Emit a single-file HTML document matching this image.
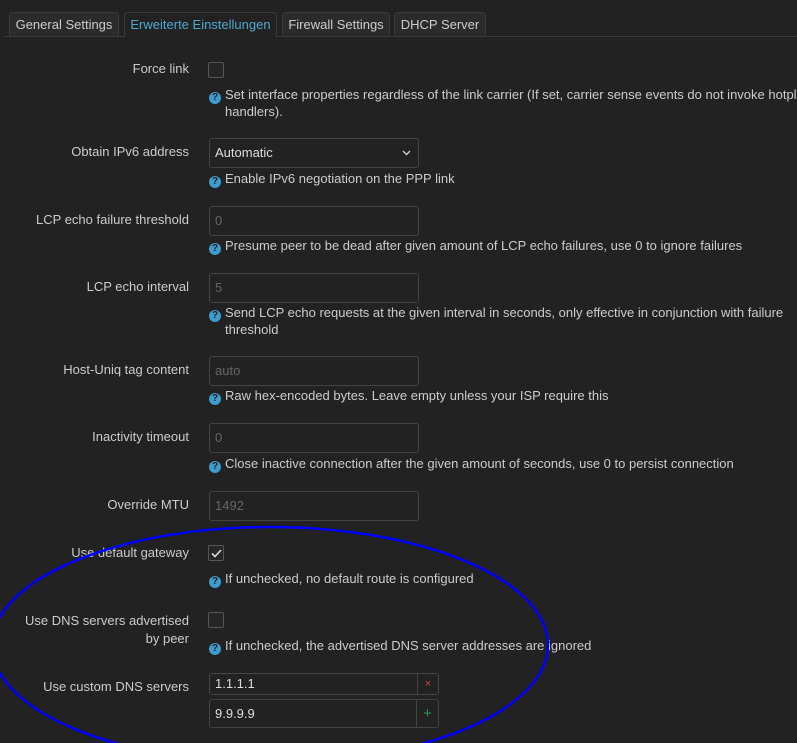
<!DOCTYPE html><html><head><style>
body{margin:0;background:#222;width:797px;height:743px;overflow:hidden;position:relative;font-family:"Liberation Sans",sans-serif;font-size:13px;color:#ccc}
.a{position:absolute}
.tab{position:absolute;top:12px;height:24px;background:#2b2b2b;border:1px solid #3a3a3a;border-bottom:none;border-radius:3px 3px 0 0;line-height:23px;font-size:13px;color:#ccc;text-align:center;box-sizing:border-box}
.lbl{position:absolute;right:608px;text-align:right;color:#ccc;line-height:16px}
.inp{position:absolute;left:209px;width:210px;height:30px;border:1px solid #444;border-radius:3px;box-sizing:border-box;background:#222;color:#666;line-height:28px;padding-left:5px}
.hlp{position:absolute;left:209px;line-height:16px;color:#ccc;white-space:nowrap}
.q{display:inline-block;width:12px;height:12px;border-radius:50%;background:#3d9ccc;color:#222;font-size:10px;font-weight:bold;line-height:12px;text-align:center;margin-right:4px;vertical-align:-1px}
.cb{position:absolute;left:208px;width:16px;height:16px;border:1px solid #555;border-radius:2px;box-sizing:border-box;background:#262626}
</style></head><body>
<div class="a" style="left:4px;right:0;top:36px;height:1px;background:#3a3a3a"></div>
<div class="tab" style="left:9px;width:110px">General Settings</div>
<div class="tab" style="left:124px;width:153px;color:#4fa8d0;background:#222;height:25px">Erweiterte Einstellungen</div>
<div class="tab" style="left:282px;width:108px">Firewall Settings</div>
<div class="tab" style="left:394px;width:92px">DHCP Server</div>

<div class="lbl" style="top:61px">Force link</div>
<div class="cb" style="top:62px"></div>
<div class="hlp" style="top:87px"><span class="q">?</span>Set interface properties regardless of the link carrier (If set, carrier sense events do not invoke hotplug<br><span style="padding-left:16px">handlers).</span></div>

<div class="lbl" style="top:144px">Obtain IPv6 address</div>
<div class="inp" style="top:138px;color:#ddd">Automatic<svg style="position:absolute;right:7px;top:11px" width="9" height="6"><path d="M1 1L4.5 4.5L8 1" fill="none" stroke="#ccc" stroke-width="1.4"/></svg></div>
<div class="hlp" style="top:171px"><span class="q">?</span>Enable IPv6 negotiation on the PPP link</div>

<div class="lbl" style="top:212px">LCP echo failure threshold</div>
<div class="inp" style="top:206px">0</div>
<div class="hlp" style="top:238px"><span class="q">?</span>Presume peer to be dead after given amount of LCP echo failures, use 0 to ignore failures</div>

<div class="lbl" style="top:279px">LCP echo interval</div>
<div class="inp" style="top:273px">5</div>
<div class="hlp" style="top:305px"><span class="q">?</span>Send LCP echo requests at the given interval in seconds, only effective in conjunction with failure<br><span style="padding-left:16px">threshold</span></div>

<div class="lbl" style="top:362px">Host-Uniq tag content</div>
<div class="inp" style="top:356px">auto</div>
<div class="hlp" style="top:388px"><span class="q">?</span>Raw hex-encoded bytes. Leave empty unless your ISP require this</div>

<div class="lbl" style="top:429px">Inactivity timeout</div>
<div class="inp" style="top:423px">0</div>
<div class="hlp" style="top:456px"><span class="q">?</span>Close inactive connection after the given amount of seconds, use 0 to persist connection</div>

<div class="lbl" style="top:497px">Override MTU</div>
<div class="inp" style="top:491px">1492</div>

<div class="lbl" style="top:545px">Use default gateway</div>
<div class="cb" style="top:545px"><svg style="position:absolute;left:2px;top:3px" width="11" height="9"><path d="M1 4.5L4 7.5L10 1" fill="none" stroke="#ddd" stroke-width="1.6"/></svg></div>
<div class="hlp" style="top:571px"><span class="q">?</span>If unchecked, no default route is configured</div>

<div class="lbl" style="top:612px;line-height:18px">Use DNS servers advertised<br>by peer</div>
<div class="cb" style="top:612px"></div>
<div class="hlp" style="top:638px"><span class="q">?</span>If unchecked, the advertised DNS server addresses are ignored</div>

<div class="lbl" style="top:679px">Use custom DNS servers</div>
<div class="inp" style="top:673px;height:22px;width:230px;line-height:20px;color:#ddd">1.1.1.1<span style="position:absolute;right:0;top:0;width:20px;height:20px;border-left:1px solid #444;color:#c44;text-align:center;font-size:11px">&#215;</span></div>
<div class="inp" style="top:699px;height:29px;width:230px;line-height:27px;color:#ddd">9.9.9.9<span style="position:absolute;right:0;top:0;width:21px;height:27px;border-left:1px solid #444;color:#2a9a5a;text-align:center;font-size:15px">+</span></div>

<svg class="a" style="left:0;top:0" width="797" height="743"><ellipse cx="270" cy="645" rx="278" ry="118" fill="none" stroke="#0000ff" stroke-width="2.5"/></svg>
</body></html>
